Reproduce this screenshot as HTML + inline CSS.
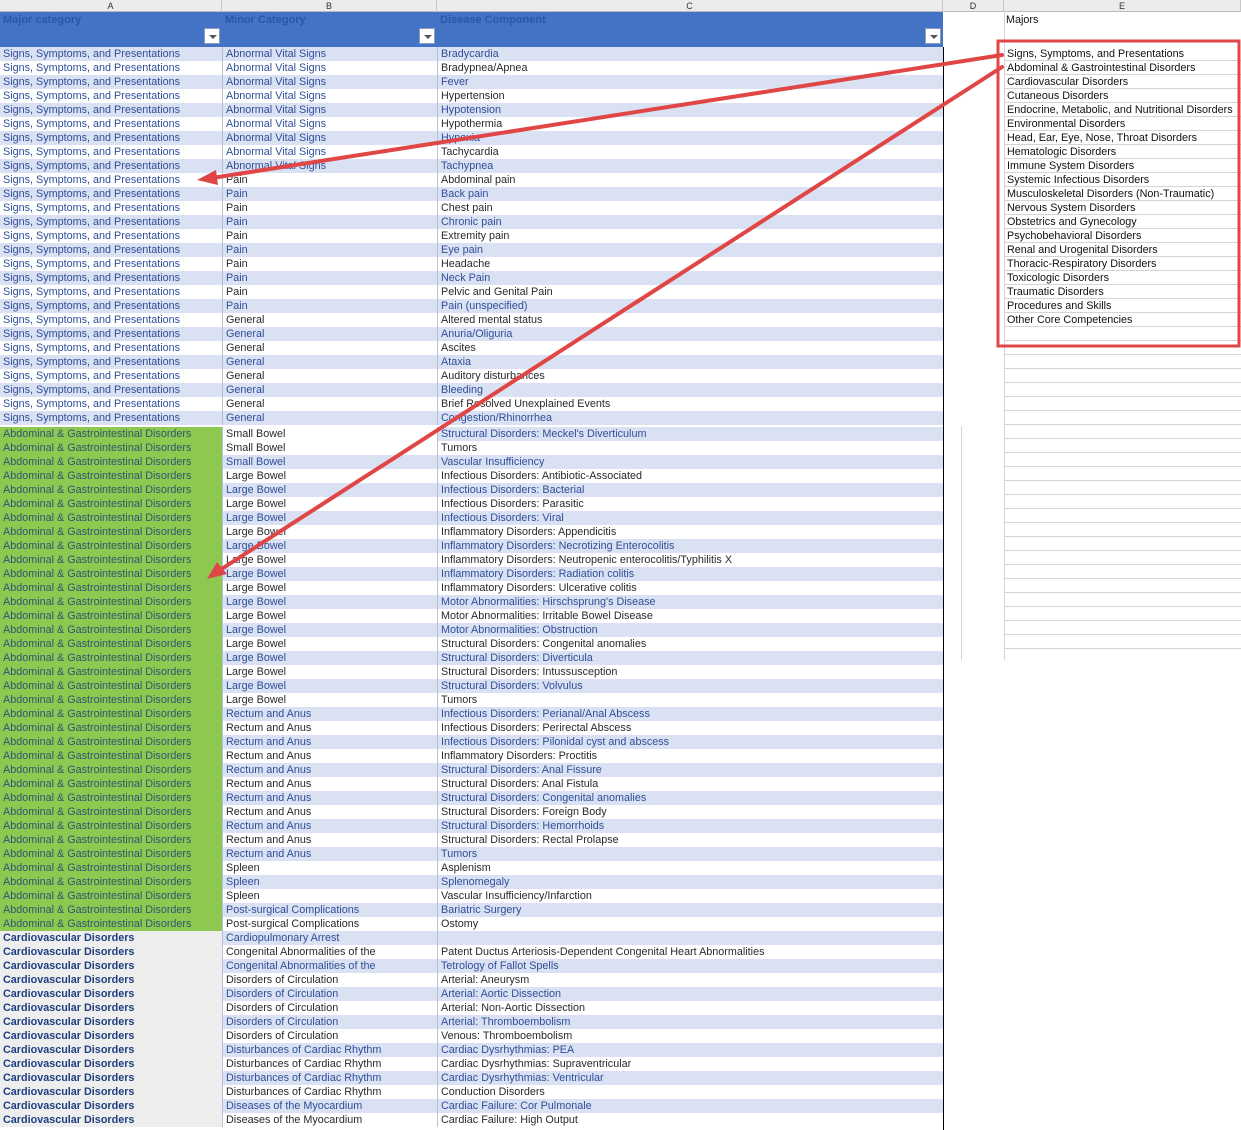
<!DOCTYPE html>
<html><head><meta charset="utf-8">
<style>
*{margin:0;padding:0;box-sizing:border-box}
body{width:1241px;height:1130px;overflow:hidden;background:#fff;font-family:"Liberation Sans",Arial,sans-serif;font-size:10.8px;position:relative}
.colhdr{position:absolute;top:0;left:0;width:1241px;height:12px;background:#ececec;border-bottom:1px solid #bbb}
.colhdr div{position:absolute;top:0;height:12px;line-height:12px;text-align:center;font-size:9px;color:#333;border-right:1px solid #c8c8c8}
.hdr{position:absolute;top:12px;left:0;width:943px;height:35px;background:#4472c4}
.hdr div{position:absolute;top:2px;font-weight:bold;font-size:11px;color:#2c55a8}
.flt{position:absolute;top:16px;width:16px;height:16px;background:#fff;border:1px solid #8a9bbf}
.flt:after{content:"";position:absolute;left:4px;top:6px;border-left:4px solid transparent;border-right:4px solid transparent;border-top:4px solid #555}
.r{position:absolute;left:0;height:14px;width:943px;border-bottom:1px solid #a7b0c8}
.r span{position:absolute;top:0;height:14px;line-height:14px;white-space:nowrap;overflow:hidden;padding-left:3px}
.a{left:0;width:222px}.b{left:222px;width:215px;border-left:1px solid #b8c0d4}.c{left:437px;width:506px;border-left:1px solid #b8c0d4}
.bl{background:#d9e1f2;color:#2f4f9a}.wh{background:#fff;color:#2a2a2a}
.g{background:#8dc851 !important;color:#2c5770 !important}
.cv{background:#eeeeee !important;color:#1f3e80 !important;font-weight:bold}
.maj{position:absolute;left:1004px;width:237px;height:14px;line-height:14px;border-bottom:1px solid #d4d4d4;padding-left:3px;color:#111}
.vline{position:absolute;background:#d4d4d4;width:1px}
</style></head><body>
<div class="colhdr">
<div style="left:0;width:222px">A</div><div style="left:222px;width:215px">B</div><div style="left:437px;width:506px">C</div><div style="left:943px;width:61px">D</div><div style="left:1004px;width:237px">E</div>
</div>
<div class="hdr">
<div style="left:3px">Major category</div><div style="left:225px">Minor Category</div><div style="left:440px">Disease Component</div>
<span class="flt" style="left:204px"></span><span class="flt" style="left:419px"></span><span class="flt" style="left:925px"></span>
</div>
<div style="position:absolute;left:1006px;top:14px;color:#111">Majors</div>
<div class="vline" style="left:1004px;top:12px;height:648px"></div>
<div class="vline" style="left:961px;top:426px;height:234px"></div>
<div style="position:absolute;left:943px;top:47px;width:1px;height:1083px;background:#000"></div>

<div class="r" style="top:47px"><span class="a bl">Signs, Symptoms, and Presentations</span><span class="b bl">Abnormal Vital Signs</span><span class="c bl">Bradycardia</span></div>
<div class="r" style="top:61px"><span class="a wh" style="color:#2f4f9a">Signs, Symptoms, and Presentations</span><span class="b wh" style="color:#2f4f9a">Abnormal Vital Signs</span><span class="c wh">Bradypnea/Apnea</span></div>
<div class="r" style="top:75px"><span class="a bl">Signs, Symptoms, and Presentations</span><span class="b bl">Abnormal Vital Signs</span><span class="c bl">Fever</span></div>
<div class="r" style="top:89px"><span class="a wh" style="color:#2f4f9a">Signs, Symptoms, and Presentations</span><span class="b wh" style="color:#2f4f9a">Abnormal Vital Signs</span><span class="c wh">Hypertension</span></div>
<div class="r" style="top:103px"><span class="a bl">Signs, Symptoms, and Presentations</span><span class="b bl">Abnormal Vital Signs</span><span class="c bl">Hypotension</span></div>
<div class="r" style="top:117px"><span class="a wh" style="color:#2f4f9a">Signs, Symptoms, and Presentations</span><span class="b wh" style="color:#2f4f9a">Abnormal Vital Signs</span><span class="c wh">Hypothermia</span></div>
<div class="r" style="top:131px"><span class="a bl">Signs, Symptoms, and Presentations</span><span class="b bl">Abnormal Vital Signs</span><span class="c bl">Hypoxia</span></div>
<div class="r" style="top:145px"><span class="a wh" style="color:#2f4f9a">Signs, Symptoms, and Presentations</span><span class="b wh" style="color:#2f4f9a">Abnormal Vital Signs</span><span class="c wh">Tachycardia</span></div>
<div class="r" style="top:159px"><span class="a bl">Signs, Symptoms, and Presentations</span><span class="b bl">Abnormal Vital Signs</span><span class="c bl">Tachypnea</span></div>
<div class="r" style="top:173px"><span class="a wh" style="color:#2f4f9a">Signs, Symptoms, and Presentations</span><span class="b wh">Pain</span><span class="c wh">Abdominal pain</span></div>
<div class="r" style="top:187px"><span class="a bl">Signs, Symptoms, and Presentations</span><span class="b bl">Pain</span><span class="c bl">Back pain</span></div>
<div class="r" style="top:201px"><span class="a wh" style="color:#2f4f9a">Signs, Symptoms, and Presentations</span><span class="b wh">Pain</span><span class="c wh">Chest pain</span></div>
<div class="r" style="top:215px"><span class="a bl">Signs, Symptoms, and Presentations</span><span class="b bl">Pain</span><span class="c bl">Chronic pain</span></div>
<div class="r" style="top:229px"><span class="a wh" style="color:#2f4f9a">Signs, Symptoms, and Presentations</span><span class="b wh">Pain</span><span class="c wh">Extremity pain</span></div>
<div class="r" style="top:243px"><span class="a bl">Signs, Symptoms, and Presentations</span><span class="b bl">Pain</span><span class="c bl">Eye pain</span></div>
<div class="r" style="top:257px"><span class="a wh" style="color:#2f4f9a">Signs, Symptoms, and Presentations</span><span class="b wh">Pain</span><span class="c wh">Headache</span></div>
<div class="r" style="top:271px"><span class="a bl">Signs, Symptoms, and Presentations</span><span class="b bl">Pain</span><span class="c bl">Neck Pain</span></div>
<div class="r" style="top:285px"><span class="a wh" style="color:#2f4f9a">Signs, Symptoms, and Presentations</span><span class="b wh">Pain</span><span class="c wh">Pelvic and Genital Pain</span></div>
<div class="r" style="top:299px"><span class="a bl">Signs, Symptoms, and Presentations</span><span class="b bl">Pain</span><span class="c bl">Pain (unspecified)</span></div>
<div class="r" style="top:313px"><span class="a wh" style="color:#2f4f9a">Signs, Symptoms, and Presentations</span><span class="b wh">General</span><span class="c wh">Altered mental status</span></div>
<div class="r" style="top:327px"><span class="a bl">Signs, Symptoms, and Presentations</span><span class="b bl">General</span><span class="c bl">Anuria/Oliguria</span></div>
<div class="r" style="top:341px"><span class="a wh" style="color:#2f4f9a">Signs, Symptoms, and Presentations</span><span class="b wh">General</span><span class="c wh">Ascites</span></div>
<div class="r" style="top:355px"><span class="a bl">Signs, Symptoms, and Presentations</span><span class="b bl">General</span><span class="c bl">Ataxia</span></div>
<div class="r" style="top:369px"><span class="a wh" style="color:#2f4f9a">Signs, Symptoms, and Presentations</span><span class="b wh">General</span><span class="c wh">Auditory disturbances</span></div>
<div class="r" style="top:383px"><span class="a bl">Signs, Symptoms, and Presentations</span><span class="b bl">General</span><span class="c bl">Bleeding</span></div>
<div class="r" style="top:397px"><span class="a wh" style="color:#2f4f9a">Signs, Symptoms, and Presentations</span><span class="b wh">General</span><span class="c wh">Brief Resolved Unexplained Events</span></div>
<div class="r" style="top:411px"><span class="a bl">Signs, Symptoms, and Presentations</span><span class="b bl">General</span><span class="c bl">Congestion/Rhinorrhea</span></div>

<div class="r" style="top:427px"><span class="a g">Abdominal &amp; Gastrointestinal Disorders</span><span class="b wh">Small Bowel</span><span class="c bl">Structural Disorders: Meckel's Diverticulum</span></div>
<div class="r" style="top:441px"><span class="a g">Abdominal &amp; Gastrointestinal Disorders</span><span class="b wh">Small Bowel</span><span class="c wh">Tumors</span></div>
<div class="r" style="top:455px"><span class="a g">Abdominal &amp; Gastrointestinal Disorders</span><span class="b bl">Small Bowel</span><span class="c bl">Vascular Insufficiency</span></div>
<div class="r" style="top:469px"><span class="a g">Abdominal &amp; Gastrointestinal Disorders</span><span class="b wh">Large Bowel</span><span class="c wh">Infectious Disorders: Antibiotic-Associated</span></div>
<div class="r" style="top:483px"><span class="a g">Abdominal &amp; Gastrointestinal Disorders</span><span class="b bl">Large Bowel</span><span class="c bl">Infectious Disorders: Bacterial</span></div>
<div class="r" style="top:497px"><span class="a g">Abdominal &amp; Gastrointestinal Disorders</span><span class="b wh">Large Bowel</span><span class="c wh">Infectious Disorders: Parasitic</span></div>
<div class="r" style="top:511px"><span class="a g">Abdominal &amp; Gastrointestinal Disorders</span><span class="b bl">Large Bowel</span><span class="c bl">Infectious Disorders: Viral</span></div>
<div class="r" style="top:525px"><span class="a g">Abdominal &amp; Gastrointestinal Disorders</span><span class="b wh">Large Bowel</span><span class="c wh">Inflammatory Disorders: Appendicitis</span></div>
<div class="r" style="top:539px"><span class="a g">Abdominal &amp; Gastrointestinal Disorders</span><span class="b bl">Large Bowel</span><span class="c bl">Inflammatory Disorders: Necrotizing Enterocolitis</span></div>
<div class="r" style="top:553px"><span class="a g">Abdominal &amp; Gastrointestinal Disorders</span><span class="b wh">Large Bowel</span><span class="c wh">Inflammatory Disorders: Neutropenic enterocolitis/Typhilitis X</span></div>
<div class="r" style="top:567px"><span class="a g">Abdominal &amp; Gastrointestinal Disorders</span><span class="b bl">Large Bowel</span><span class="c bl">Inflammatory Disorders: Radiation colitis</span></div>
<div class="r" style="top:581px"><span class="a g">Abdominal &amp; Gastrointestinal Disorders</span><span class="b wh">Large Bowel</span><span class="c wh">Inflammatory Disorders: Ulcerative colitis</span></div>
<div class="r" style="top:595px"><span class="a g">Abdominal &amp; Gastrointestinal Disorders</span><span class="b bl">Large Bowel</span><span class="c bl">Motor Abnormalities: Hirschsprung's Disease</span></div>
<div class="r" style="top:609px"><span class="a g">Abdominal &amp; Gastrointestinal Disorders</span><span class="b wh">Large Bowel</span><span class="c wh">Motor Abnormalities: Irritable Bowel Disease</span></div>
<div class="r" style="top:623px"><span class="a g">Abdominal &amp; Gastrointestinal Disorders</span><span class="b bl">Large Bowel</span><span class="c bl">Motor Abnormalities: Obstruction</span></div>
<div class="r" style="top:637px"><span class="a g">Abdominal &amp; Gastrointestinal Disorders</span><span class="b wh">Large Bowel</span><span class="c wh">Structural Disorders: Congenital anomalies</span></div>
<div class="r" style="top:651px"><span class="a g">Abdominal &amp; Gastrointestinal Disorders</span><span class="b bl">Large Bowel</span><span class="c bl">Structural Disorders: Diverticula</span></div>
<div class="r" style="top:665px"><span class="a g">Abdominal &amp; Gastrointestinal Disorders</span><span class="b wh">Large Bowel</span><span class="c wh">Structural Disorders: Intussusception</span></div>
<div class="r" style="top:679px"><span class="a g">Abdominal &amp; Gastrointestinal Disorders</span><span class="b bl">Large Bowel</span><span class="c bl">Structural Disorders: Volvulus</span></div>
<div class="r" style="top:693px"><span class="a g">Abdominal &amp; Gastrointestinal Disorders</span><span class="b wh">Large Bowel</span><span class="c wh">Tumors</span></div>
<div class="r" style="top:707px"><span class="a g">Abdominal &amp; Gastrointestinal Disorders</span><span class="b bl">Rectum and Anus</span><span class="c bl">Infectious Disorders: Perianal/Anal Abscess</span></div>
<div class="r" style="top:721px"><span class="a g">Abdominal &amp; Gastrointestinal Disorders</span><span class="b wh">Rectum and Anus</span><span class="c wh">Infectious Disorders: Perirectal Abscess</span></div>
<div class="r" style="top:735px"><span class="a g">Abdominal &amp; Gastrointestinal Disorders</span><span class="b bl">Rectum and Anus</span><span class="c bl">Infectious Disorders: Pilonidal cyst and abscess</span></div>
<div class="r" style="top:749px"><span class="a g">Abdominal &amp; Gastrointestinal Disorders</span><span class="b wh">Rectum and Anus</span><span class="c wh">Inflammatory Disorders: Proctitis</span></div>
<div class="r" style="top:763px"><span class="a g">Abdominal &amp; Gastrointestinal Disorders</span><span class="b bl">Rectum and Anus</span><span class="c bl">Structural Disorders: Anal Fissure</span></div>
<div class="r" style="top:777px"><span class="a g">Abdominal &amp; Gastrointestinal Disorders</span><span class="b wh">Rectum and Anus</span><span class="c wh">Structural Disorders: Anal Fistula</span></div>
<div class="r" style="top:791px"><span class="a g">Abdominal &amp; Gastrointestinal Disorders</span><span class="b bl">Rectum and Anus</span><span class="c bl">Structural Disorders: Congenital anomalies</span></div>
<div class="r" style="top:805px"><span class="a g">Abdominal &amp; Gastrointestinal Disorders</span><span class="b wh">Rectum and Anus</span><span class="c wh">Structural Disorders: Foreign Body</span></div>
<div class="r" style="top:819px"><span class="a g">Abdominal &amp; Gastrointestinal Disorders</span><span class="b bl">Rectum and Anus</span><span class="c bl">Structural Disorders: Hemorrhoids</span></div>
<div class="r" style="top:833px"><span class="a g">Abdominal &amp; Gastrointestinal Disorders</span><span class="b wh">Rectum and Anus</span><span class="c wh">Structural Disorders: Rectal Prolapse</span></div>
<div class="r" style="top:847px"><span class="a g">Abdominal &amp; Gastrointestinal Disorders</span><span class="b bl">Rectum and Anus</span><span class="c bl">Tumors</span></div>
<div class="r" style="top:861px"><span class="a g">Abdominal &amp; Gastrointestinal Disorders</span><span class="b wh">Spleen</span><span class="c wh">Asplenism</span></div>
<div class="r" style="top:875px"><span class="a g">Abdominal &amp; Gastrointestinal Disorders</span><span class="b bl">Spleen</span><span class="c bl">Splenomegaly</span></div>
<div class="r" style="top:889px"><span class="a g">Abdominal &amp; Gastrointestinal Disorders</span><span class="b wh">Spleen</span><span class="c wh">Vascular Insufficiency/Infarction</span></div>
<div class="r" style="top:903px"><span class="a g">Abdominal &amp; Gastrointestinal Disorders</span><span class="b bl">Post-surgical Complications</span><span class="c bl">Bariatric Surgery</span></div>
<div class="r" style="top:917px"><span class="a g">Abdominal &amp; Gastrointestinal Disorders</span><span class="b wh">Post-surgical Complications</span><span class="c wh">Ostomy</span></div>

<div class="r" style="top:931px"><span class="a cv">Cardiovascular Disorders</span><span class="b bl">Cardiopulmonary Arrest</span><span class="c bl"></span></div>
<div class="r" style="top:945px"><span class="a cv">Cardiovascular Disorders</span><span class="b wh">Congenital Abnormalities of the</span><span class="c wh">Patent Ductus Arteriosis-Dependent Congenital Heart Abnormalities</span></div>
<div class="r" style="top:959px"><span class="a cv">Cardiovascular Disorders</span><span class="b bl">Congenital Abnormalities of the</span><span class="c bl">Tetrology of Fallot Spells</span></div>
<div class="r" style="top:973px"><span class="a cv">Cardiovascular Disorders</span><span class="b wh">Disorders of Circulation</span><span class="c wh">Arterial: Aneurysm</span></div>
<div class="r" style="top:987px"><span class="a cv">Cardiovascular Disorders</span><span class="b bl">Disorders of Circulation</span><span class="c bl">Arterial: Aortic Dissection</span></div>
<div class="r" style="top:1001px"><span class="a cv">Cardiovascular Disorders</span><span class="b wh">Disorders of Circulation</span><span class="c wh">Arterial: Non-Aortic Dissection</span></div>
<div class="r" style="top:1015px"><span class="a cv">Cardiovascular Disorders</span><span class="b bl">Disorders of Circulation</span><span class="c bl">Arterial: Thromboembolism</span></div>
<div class="r" style="top:1029px"><span class="a cv">Cardiovascular Disorders</span><span class="b wh">Disorders of Circulation</span><span class="c wh">Venous: Thromboembolism</span></div>
<div class="r" style="top:1043px"><span class="a cv">Cardiovascular Disorders</span><span class="b bl">Disturbances of Cardiac Rhythm</span><span class="c bl">Cardiac Dysrhythmias: PEA</span></div>
<div class="r" style="top:1057px"><span class="a cv">Cardiovascular Disorders</span><span class="b wh">Disturbances of Cardiac Rhythm</span><span class="c wh">Cardiac Dysrhythmias: Supraventricular</span></div>
<div class="r" style="top:1071px"><span class="a cv">Cardiovascular Disorders</span><span class="b bl">Disturbances of Cardiac Rhythm</span><span class="c bl">Cardiac Dysrhythmias: Ventricular</span></div>
<div class="r" style="top:1085px"><span class="a cv">Cardiovascular Disorders</span><span class="b wh">Disturbances of Cardiac Rhythm</span><span class="c wh">Conduction Disorders</span></div>
<div class="r" style="top:1099px"><span class="a cv">Cardiovascular Disorders</span><span class="b bl">Diseases of the Myocardium</span><span class="c bl">Cardiac Failure: Cor Pulmonale</span></div>
<div class="r" style="top:1113px"><span class="a cv">Cardiovascular Disorders</span><span class="b wh">Diseases of the Myocardium</span><span class="c wh">Cardiac Failure: High Output</span></div>

<div class="maj" style="top:47px">Signs, Symptoms, and Presentations</div>
<div class="maj" style="top:61px">Abdominal &amp; Gastrointestinal Disorders</div>
<div class="maj" style="top:75px">Cardiovascular Disorders</div>
<div class="maj" style="top:89px">Cutaneous Disorders</div>
<div class="maj" style="top:103px">Endocrine, Metabolic, and Nutritional Disorders</div>
<div class="maj" style="top:117px">Environmental Disorders</div>
<div class="maj" style="top:131px">Head, Ear, Eye, Nose, Throat Disorders</div>
<div class="maj" style="top:145px">Hematologic Disorders</div>
<div class="maj" style="top:159px">Immune System Disorders</div>
<div class="maj" style="top:173px">Systemic Infectious Disorders</div>
<div class="maj" style="top:187px">Musculoskeletal Disorders (Non-Traumatic)</div>
<div class="maj" style="top:201px">Nervous System Disorders</div>
<div class="maj" style="top:215px">Obstetrics and Gynecology</div>
<div class="maj" style="top:229px">Psychobehavioral Disorders</div>
<div class="maj" style="top:243px">Renal and Urogenital Disorders</div>
<div class="maj" style="top:257px">Thoracic-Respiratory Disorders</div>
<div class="maj" style="top:271px">Toxicologic Disorders</div>
<div class="maj" style="top:285px">Traumatic Disorders</div>
<div class="maj" style="top:299px">Procedures and Skills</div>
<div class="maj" style="top:313px">Other Core Competencies</div>
<div class="maj" style="top:327px"></div>
<div class="maj" style="top:341px"></div>
<div class="maj" style="top:355px"></div><div class="maj" style="top:369px"></div><div class="maj" style="top:383px"></div><div class="maj" style="top:397px"></div><div class="maj" style="top:411px"></div><div class="maj" style="top:425px"></div><div class="maj" style="top:439px"></div><div class="maj" style="top:453px"></div><div class="maj" style="top:467px"></div><div class="maj" style="top:481px"></div><div class="maj" style="top:495px"></div><div class="maj" style="top:509px"></div><div class="maj" style="top:523px"></div><div class="maj" style="top:537px"></div><div class="maj" style="top:551px"></div><div class="maj" style="top:565px"></div><div class="maj" style="top:579px"></div><div class="maj" style="top:593px"></div><div class="maj" style="top:607px"></div><div class="maj" style="top:621px"></div><div class="maj" style="top:635px"></div>

<svg style="position:absolute;left:0;top:0" width="1241" height="1130">
<rect x="998" y="41" width="241" height="305" fill="none" stroke="#e04848" stroke-width="3"/>
<g stroke="#e04646" stroke-width="4" stroke-linecap="round" fill="#e04646">
<line x1="1002" y1="55" x2="212" y2="178"/>
<line x1="1002" y1="67" x2="220" y2="570"/>
</g>
<polygon points="197,180 216,170 218,185" fill="#e04646"/>
<polygon points="207,579 217,562 227,574" fill="#e04646"/>
</svg>
</body></html>
